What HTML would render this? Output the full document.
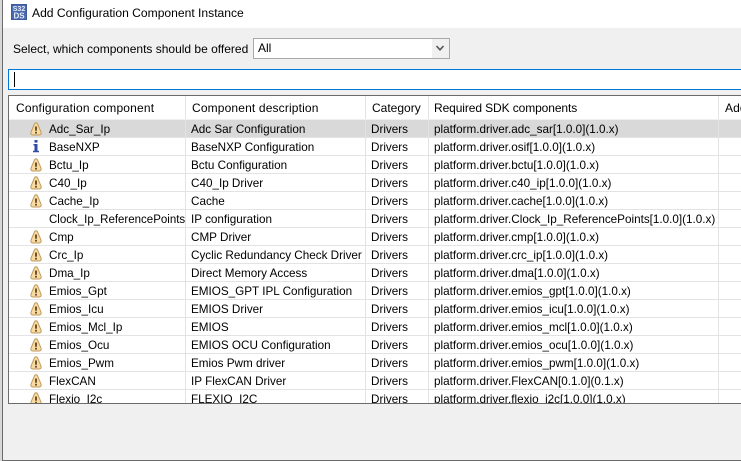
<!DOCTYPE html>
<html><head><meta charset="utf-8">
<style>
html,body{margin:0;padding:0}
body{width:741px;height:461px;overflow:hidden;background:#f0f0f0;position:relative;font-family:"Liberation Sans",sans-serif;font-size:12px;color:#000}
.a{position:absolute;white-space:nowrap}
.t{position:absolute;white-space:nowrap;line-height:20px;height:20px;font-size:11.7px}
.h{font-size:12px;letter-spacing:.1px;top:99px;line-height:18px;height:18px}
.hl{position:absolute;left:9px;width:732px;height:1px;background:#e3e3e3}
.vl{position:absolute;width:1px;background:#e3e3e3;top:96px;height:307px}
svg.i{position:absolute;left:29px;width:14px;height:14px}
</style></head><body>
<div class="a" style="left:0;top:0;width:2px;height:461px;background:#d8d8d8"></div>
<div class="a" style="left:2px;top:0;width:1px;height:461px;background:#6b6b6b"></div>
<div class="a" style="left:3px;top:0;width:738px;height:28px;background:#fff"></div>
<div class="a" style="left:3px;top:460px;width:738px;height:1px;background:#6b6b6b"></div>
<svg class="a" style="left:11px;top:4px" width="16" height="16" viewBox="0 0 16 16"><rect width="16" height="16" fill="#3c5a9e"/><rect x="1" y="1" width="14" height="14" fill="#4a69ad"/><text x="8" y="7.2" font-family="Liberation Sans" font-size="7" font-weight="bold" fill="#e8eefa" text-anchor="middle">S32</text><text x="8" y="14.5" font-family="Liberation Sans" font-size="8" font-weight="bold" fill="#e8eefa" text-anchor="middle">DS</text></svg>
<div class="a" style="left:32px;top:5px;font-size:12.1px;line-height:16px">Add Configuration Component Instance</div>
<div class="a" style="left:13px;top:41px;font-size:12px;line-height:16px">Select, which components should be offered</div>
<div class="a" style="left:253px;top:38px;width:195px;height:19px;background:#fff;border:1px solid #a9a9a9"></div>
<div class="a" style="left:258px;top:40px;line-height:16px;font-size:12px">All</div>
<div class="a" style="left:432px;top:39px;width:17px;height:19px;background:#f0f0f0"></div>
<svg class="a" style="left:435px;top:45px" width="10" height="7" viewBox="0 0 10 7"><path d="M1.5 1 L5 4.8 L8.5 1" fill="none" stroke="#555" stroke-width="1.6"/></svg>
<div class="a" style="left:8px;top:69px;width:733px;height:19px;background:#fff;border:1px solid #0078d7;border-right:none"></div>
<div class="a" style="left:14px;top:72px;width:1px;height:15px;background:#000"></div>
<div class="a" style="left:8px;top:95px;width:733px;height:309px;background:#fff;overflow:hidden;box-sizing:border-box;border-left:1px solid #6b6b6b;border-top:1px solid #6b6b6b;border-bottom:1px solid #6b6b6b"></div>
<div class="a" style="left:9px;top:120px;width:732px;height:18px;background:#d9d9d9"></div>
<div class="hl" style="top:155px"></div><div class="hl" style="top:173px"></div><div class="hl" style="top:191px"></div><div class="hl" style="top:209px"></div><div class="hl" style="top:227px"></div><div class="hl" style="top:245px"></div><div class="hl" style="top:263px"></div><div class="hl" style="top:281px"></div><div class="hl" style="top:299px"></div><div class="hl" style="top:317px"></div><div class="hl" style="top:335px"></div><div class="hl" style="top:353px"></div><div class="hl" style="top:371px"></div><div class="hl" style="top:389px"></div>
<div class="hl" style="top:137px"></div>
<div class="vl" style="left:185px"></div><div class="vl" style="left:365px"></div><div class="vl" style="left:428px"></div><div class="vl" style="left:718px"></div>
<div class="hl" style="top:119px;background:#f0f0f0"></div>

<div class="t h" style="left:16px;letter-spacing:.18px">Configuration component</div>
<div class="t h" style="left:192px;letter-spacing:.15px">Component description</div>
<div class="t h" style="left:372px;letter-spacing:0">Category</div>
<div class="t h" style="left:434px;letter-spacing:-.1px">Required SDK components</div>
<div class="t h" style="left:725px">Add</div>

<svg width="0" height="0" style="position:absolute"><defs><symbol id="w" viewBox="0 0 14 14"><path d="M7 .8 C8 .8 8.4 1.4 8.8 2.4 L11.8 9.6 C12.6 11.4 12 13 10.4 13 L3.6 13 C2 13 1.4 11.4 2.2 9.6 L5.2 2.4 C5.6 1.4 6 .8 7 .8 Z" fill="#f8dba2" stroke="#bf9a5c" stroke-width="1"/><rect x="6.1" y="4.5" width="1.8" height="4.2" fill="#5e4520"/><rect x="6.1" y="9.8" width="1.8" height="1.8" fill="#5e4520"/></symbol><symbol id="n" viewBox="0 0 14 14"><rect x="5.5" y="0" width="3" height="2.6" fill="#2b4ea3"/><path d="M4.5 4 H8.5 V10.7 H10 V12.2 H4 V10.7 H5.5 V5.5 H4.5 Z" fill="#2b4ea3"/></symbol></defs></svg>

<svg class="i" style="top:122px"><use href="#w"/></svg>
<div class="t" style="left:49px;top:120px">Adc_Sar_Ip</div><div class="t" style="left:191px;top:120px">Adc Sar Configuration</div><div class="t" style="left:371px;top:120px">Drivers</div><div class="t" style="left:434px;top:120px">platform.driver.adc_sar[1.0.0](1.0.x)</div>

<svg class="i" style="top:140px"><use href="#n"/></svg>
<div class="t" style="left:49px;top:138px">BaseNXP</div><div class="t" style="left:191px;top:138px">BaseNXP Configuration</div><div class="t" style="left:371px;top:138px">Drivers</div><div class="t" style="left:434px;top:138px">platform.driver.osif[1.0.0](1.0.x)</div>

<svg class="i" style="top:158px"><use href="#w"/></svg>
<div class="t" style="left:49px;top:156px">Bctu_Ip</div><div class="t" style="left:191px;top:156px">Bctu Configuration</div><div class="t" style="left:371px;top:156px">Drivers</div><div class="t" style="left:434px;top:156px">platform.driver.bctu[1.0.0](1.0.x)</div>

<svg class="i" style="top:176px"><use href="#w"/></svg>
<div class="t" style="left:49px;top:174px">C40_Ip</div><div class="t" style="left:191px;top:174px">C40_Ip Driver</div><div class="t" style="left:371px;top:174px">Drivers</div><div class="t" style="left:434px;top:174px">platform.driver.c40_ip[1.0.0](1.0.x)</div>

<svg class="i" style="top:194px"><use href="#w"/></svg>
<div class="t" style="left:49px;top:192px">Cache_Ip</div><div class="t" style="left:191px;top:192px">Cache</div><div class="t" style="left:371px;top:192px">Drivers</div><div class="t" style="left:434px;top:192px">platform.driver.cache[1.0.0](1.0.x)</div>

<div class="t" style="left:49px;top:210px;font-size:11.5px">Clock_Ip_ReferencePoints</div><div class="t" style="left:191px;top:210px">IP configuration</div><div class="t" style="left:371px;top:210px">Drivers</div><div class="t" style="left:434px;top:210px">platform.driver.Clock_Ip_ReferencePoints[1.0.0](1.0.x)</div>

<svg class="i" style="top:230px"><use href="#w"/></svg>
<div class="t" style="left:49px;top:228px">Cmp</div><div class="t" style="left:191px;top:228px">CMP Driver</div><div class="t" style="left:371px;top:228px">Drivers</div><div class="t" style="left:434px;top:228px">platform.driver.cmp[1.0.0](1.0.x)</div>

<svg class="i" style="top:248px"><use href="#w"/></svg>
<div class="t" style="left:49px;top:246px">Crc_Ip</div><div class="t" style="left:191px;top:246px">Cyclic Redundancy Check Driver</div><div class="t" style="left:371px;top:246px">Drivers</div><div class="t" style="left:434px;top:246px">platform.driver.crc_ip[1.0.0](1.0.x)</div>

<svg class="i" style="top:266px"><use href="#w"/></svg>
<div class="t" style="left:49px;top:264px">Dma_Ip</div><div class="t" style="left:191px;top:264px">Direct Memory Access</div><div class="t" style="left:371px;top:264px">Drivers</div><div class="t" style="left:434px;top:264px">platform.driver.dma[1.0.0](1.0.x)</div>

<svg class="i" style="top:284px"><use href="#w"/></svg>
<div class="t" style="left:49px;top:282px">Emios_Gpt</div><div class="t" style="left:191px;top:282px">EMIOS_GPT IPL Configuration</div><div class="t" style="left:371px;top:282px">Drivers</div><div class="t" style="left:434px;top:282px">platform.driver.emios_gpt[1.0.0](1.0.x)</div>

<svg class="i" style="top:302px"><use href="#w"/></svg>
<div class="t" style="left:49px;top:300px">Emios_Icu</div><div class="t" style="left:191px;top:300px">EMIOS Driver</div><div class="t" style="left:371px;top:300px">Drivers</div><div class="t" style="left:434px;top:300px">platform.driver.emios_icu[1.0.0](1.0.x)</div>

<svg class="i" style="top:320px"><use href="#w"/></svg>
<div class="t" style="left:49px;top:318px">Emios_Mcl_Ip</div><div class="t" style="left:191px;top:318px">EMIOS</div><div class="t" style="left:371px;top:318px">Drivers</div><div class="t" style="left:434px;top:318px">platform.driver.emios_mcl[1.0.0](1.0.x)</div>

<svg class="i" style="top:338px"><use href="#w"/></svg>
<div class="t" style="left:49px;top:336px">Emios_Ocu</div><div class="t" style="left:191px;top:336px">EMIOS OCU Configuration</div><div class="t" style="left:371px;top:336px">Drivers</div><div class="t" style="left:434px;top:336px">platform.driver.emios_ocu[1.0.0](1.0.x)</div>

<svg class="i" style="top:356px"><use href="#w"/></svg>
<div class="t" style="left:49px;top:354px">Emios_Pwm</div><div class="t" style="left:191px;top:354px">Emios Pwm driver</div><div class="t" style="left:371px;top:354px">Drivers</div><div class="t" style="left:434px;top:354px">platform.driver.emios_pwm[1.0.0](1.0.x)</div>

<svg class="i" style="top:374px"><use href="#w"/></svg>
<div class="t" style="left:49px;top:372px">FlexCAN</div><div class="t" style="left:191px;top:372px">IP FlexCAN Driver</div><div class="t" style="left:371px;top:372px">Drivers</div><div class="t" style="left:434px;top:372px">platform.driver.FlexCAN[0.1.0](0.1.x)</div>

<div class="a" style="left:9px;top:390px;width:732px;height:13px;overflow:hidden">
<svg class="i" style="left:20px;top:2px"><use href="#w"/></svg>
<div class="t" style="left:40px;top:0">Flexio_I2c</div><div class="t" style="left:182px;top:0">FLEXIO_I2C</div><div class="t" style="left:362px;top:0">Drivers</div><div class="t" style="left:425px;top:0">platform.driver.flexio_i2c[1.0.0](1.0.x)</div>
</div>
</body></html>
